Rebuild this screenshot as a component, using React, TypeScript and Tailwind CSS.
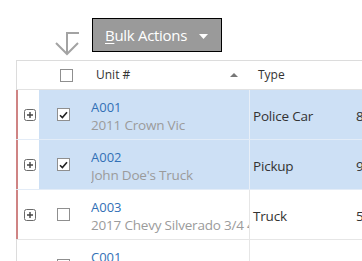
import { ReactNode } from "react";

type Unit = {
    code: string;
    name: string;
    type: string;
    next: string;
    checked: boolean;
    flagged: boolean;
};

const units: Unit[] = [
    { code: "A001", name: "2011 Crown Vic", type: "Police Car", next: "8", checked: true, flagged: true },
    { code: "A002", name: "John Doe's Truck", type: "Pickup", next: "9", checked: true, flagged: true },
    { code: "A003", name: "2017 Chevy Silverado 3/4 4x4", type: "Truck", next: "5", checked: false, flagged: true },
    { code: "C001", name: "2015 Ford Transit", type: "Van", next: "3", checked: false, flagged: false },
];

function Checkbox({ checked }: { checked?: boolean }) {
    return (
        <span className="w-[13px] h-[13px] border border-[#8f8f8f] bg-white flex items-center justify-center">
            {checked && (
                <svg width="9" height="8" viewBox="0 0 9 8">
                    <path d="M1 4.2 L3.4 6.6 L8 1.2" fill="none" stroke="#222" strokeWidth="1.6" />
                </svg>
            )}
        </span>
    );
}

function ExpandIcon() {
    return (
        <svg width="12" height="12" viewBox="0 0 12 12">
            <rect x="0.5" y="0.5" width="11" height="11" rx="2" fill="white" stroke="#6b6b6b" />
            <path d="M3 6 H9 M6 3 V9" stroke="#444" strokeWidth="1.4" />
        </svg>
    );
}

function Cell({ className, children }: { className: string; children?: ReactNode }) {
    return <div className={`flex shrink-0 ${className}`}>{children}</div>;
}

export default function App() {
    return (
        <div className="w-[362px] h-[261px] overflow-hidden bg-white font-['Open_Sans',sans-serif]">
            <div className="flex h-[60px]">
                <svg width="26" height="26" viewBox="0 0 26 26" className="ml-[54px] mt-[30px]">
                    <path d="M25 3 H13 V24" fill="none" stroke="#a3a3a3" strokeWidth="2" />
                    <path d="M2 13 L13 24 L24 13" fill="none" stroke="#a3a3a3" strokeWidth="2" />
                </svg>
                <button className="ml-[12px] mt-[18px] w-[130px] h-[34px] border border-black bg-[#9a9a9a] text-white text-[15px] tracking-[-0.3px] flex items-center pl-[12px]">
                    <span><u className="underline-offset-2">B</u>ulk Actions</span>
                    <svg width="9" height="5" viewBox="0 0 9 5" className="ml-[12px] mt-[2px]">
                        <path d="M0 0 H9 L4.5 5 Z" fill="white" />
                    </svg>
                </button>
            </div>

            <div className="ml-[16px] w-[420px] border-l border-t border-[#dcdcdc]">
                <div className="flex h-[29px] border-b border-[#e2e2e2] text-[12px] text-[#333]">
                    <Cell className="w-[23px]" />
                    <Cell className="w-[52px] items-center pl-[20px]"><Checkbox /></Cell>
                    <Cell className="w-[158px] items-center pl-[4px] justify-between pr-[12px]">
                        <span>Unit #</span>
                        <svg width="8" height="4" viewBox="0 0 8 4"><path d="M0 4 L4 0 L8 4 Z" fill="#777" /></svg>
                    </Cell>
                    <Cell className="w-[105px] items-center pl-[8px]">Type</Cell>
                </div>

                {units.map(u => (
                    <div key={u.code} className={`flex h-[50px] border-b ${u.checked ? "border-[#e3ecf7]" : "border-[#e6e6e6]"}`}>
                        <Cell className={`w-[23px] -ml-px items-center pl-[6px] bg-white ${u.flagged ? "border-l-2 border-[#cf8484]" : "border-l border-[#dcdcdc] pt-[26px] items-start"}`}>
                            <ExpandIcon />
                        </Cell>
                        <div className={`flex flex-1 ${u.checked ? "bg-[#cde0f5]" : "bg-white"}`}>
                            <Cell className={`w-[52px] pl-[18px] ${u.flagged ? "items-center" : "items-start pt-[19px]"}`}>
                                <Checkbox checked={u.checked} />
                            </Cell>
                            <Cell className="w-[158px] flex-col justify-start pt-[8px] overflow-hidden whitespace-nowrap">
                                <span className="text-[13px] leading-[18px] text-[#3270b6]">{u.code}</span>
                                <span className="text-[13.5px] leading-[19px] tracking-[-0.2px] text-[#9b9b9b] overflow-hidden">{u.name}</span>
                            </Cell>
                            <Cell className={`w-[105px] items-center pl-[3px] pt-[3px] text-[13.5px] tracking-[-0.2px] text-[#333] border-l ${u.checked ? "border-[#e8eff8]" : "border-[#e6e6e6]"}`}>
                                {u.flagged ? u.type : ""}
                            </Cell>
                            <Cell className="items-center pl-[2px] pt-[3px] text-[13.5px] text-[#333]">{u.flagged ? u.next : ""}</Cell>
                        </div>
                    </div>
                ))}
            </div>
        </div>
    );
}
